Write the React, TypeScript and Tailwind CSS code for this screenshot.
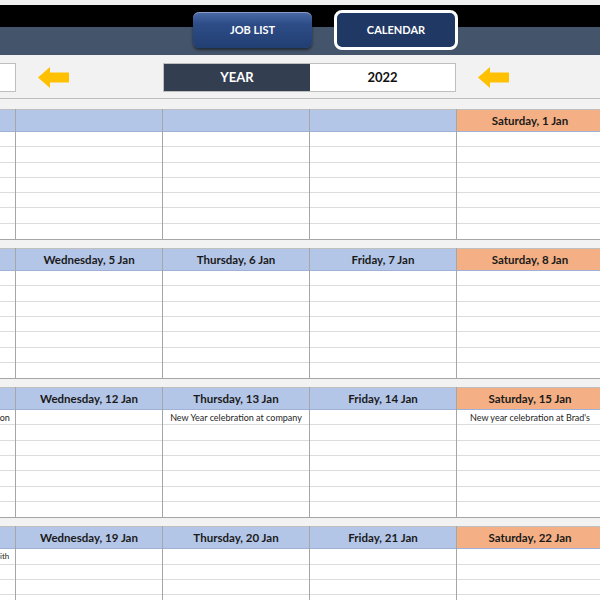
import React from 'react';

type Day = {
  label: string;
  weekend?: boolean;
  events?: string[];
  small?: boolean;
};

const weeks: Day[][] = [
  [
    { label: 'Friday, 31 Dec' },
    { label: '' },
    { label: '' },
    { label: '' },
    { label: 'Saturday, 1 Jan', weekend: true },
  ],
  [
    { label: 'Tuesday, 4 Jan' },
    { label: 'Wednesday, 5 Jan' },
    { label: 'Thursday, 6 Jan' },
    { label: 'Friday, 7 Jan' },
    { label: 'Saturday, 8 Jan', weekend: true },
  ],
  [
    { label: 'Tuesday, 11 Jan', events: ['Team meeting at the main location'] },
    { label: 'Wednesday, 12 Jan' },
    { label: 'Thursday, 13 Jan', events: ['New Year celebration at company'] },
    { label: 'Friday, 14 Jan' },
    { label: "Saturday, 15 Jan", weekend: true, events: ["New year celebration at Brad's"] },
  ],
  [
    { label: 'Tuesday, 18 Jan', small: true, events: ['Annual budget review with John Smith'] },
    { label: 'Wednesday, 19 Jan' },
    { label: 'Thursday, 20 Jan' },
    { label: 'Friday, 21 Jan' },
    { label: 'Saturday, 22 Jan', weekend: true },
  ],
];

const Arrow = () => (
  <svg width="31" height="21" viewBox="0 0 31 21">
    <polygon points="0,10.5 12,0 12,5.5 31,5.5 31,15.5 12,15.5 12,21" fill="#ffc000" />
  </svg>
);

const Week: React.FC<{ days: Day[]; first?: boolean }> = ({ days, first }) => (
  <div className={`flex ml-[-131px] ${first ? 'mt-[10px]' : 'mt-[8px]'}`}>
    {days.map((d, i) => (
      <div key={i} className="w-[147px] shrink-0 border-r border-[#a6a6a6] border-b">
        <div
          className={`h-[23px] flex items-center justify-center text-[11.5px] font-bold text-[#1a1a1a] border-t border-[#bfbfbf] border-b border-b-[#9fb1d4] ${
            d.weekend ? 'bg-[#f4b084]' : 'bg-[#b4c6e7]'
          }`}
        >
          {i === 0 ? '' : d.label}
        </div>
        {Array.from({ length: 7 }).map((_, r) => (
          <div
            key={r}
            className={`h-[15.3px] bg-white flex items-center justify-center whitespace-nowrap overflow-hidden text-[#262626] ${
              d.small ? 'text-[8px]' : 'text-[9px]'
            } ${r < 6 ? 'border-b border-[#dcdcdc]' : ''}`}
          >
            {d.events && d.events[r]}
          </div>
        ))}
      </div>
    ))}
  </div>
);

export default function App() {
  return (
    <div className="w-[600px] h-[600px] overflow-hidden bg-[#f2f2f2] font-['Lato','Open_Sans',sans-serif]">
      <div className="h-[5px] bg-[#f0f0f0]" />
      {/* top menu */}
      <div className="h-[50px] flex items-center pl-[193px] bg-[linear-gradient(to_bottom,#000_0px,#000_22px,#44546a_22px,#44546a_100%)]">
        <button className="w-[119px] h-[36px] rounded-[6px] bg-[linear-gradient(to_bottom,#4a6aa6_0%,#2d4c86_35%,#223f73_100%)] shadow-[inset_0_1px_0_rgba(255,255,255,0.35),0_2px_3px_rgba(0,0,0,0.5)] text-white text-[11px] font-bold">
          JOB LIST
        </button>
        <button className="ml-[22px] w-[124px] h-[40px] rounded-[8px] border-[3px] border-white bg-[#1f3864] text-white text-[11px] font-bold">
          CALENDAR
        </button>
      </div>

      {/* year selector */}
      <div className="h-[44px] flex items-center border-b border-[#bdbdbd]">
        <div className="w-[16px] h-[29px] bg-white border border-[#bfbfbf] border-l-0 mt-[2px]" />
        <div className="ml-[22px] mt-[2px] flex">
          <Arrow />
        </div>
        <div className="ml-[94px] mt-[2px] flex h-[29px] w-[293px] border border-[#bfbfbf]">
          <div className="w-[146px] bg-[#333f50] text-white font-bold text-[13px] flex items-center justify-center">
            YEAR
          </div>
          <div className="flex-1 bg-white text-[#111] font-bold text-[13px] flex items-center justify-center">
            2022
          </div>
        </div>
        <div className="ml-[22px] mt-[2px] flex">
          <Arrow />
        </div>
      </div>

      {weeks.map((w, i) => (
        <Week key={i} days={w} first={i === 0} />
      ))}
    </div>
  );
}
